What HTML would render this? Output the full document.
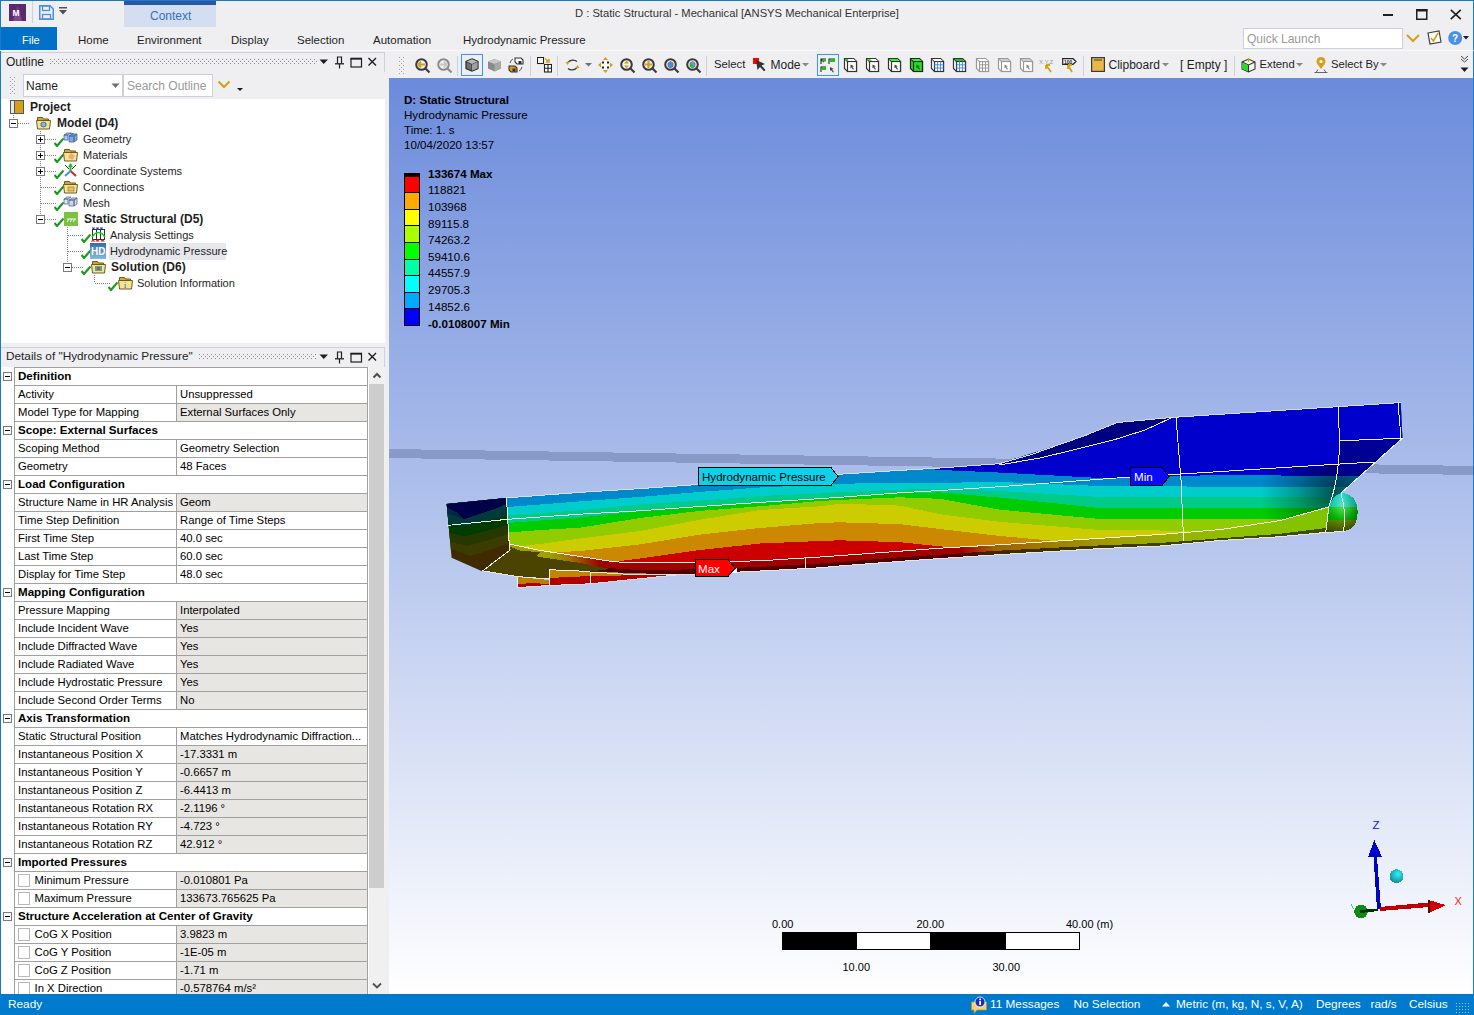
<!DOCTYPE html>
<html><head><meta charset="utf-8">
<style>
*{margin:0;padding:0;box-sizing:border-box}
html,body{width:1474px;height:1015px;overflow:hidden;background:#efeff2;font-family:"Liberation Sans",sans-serif;font-size:11px;color:#1e1e1e;position:relative}
.a{position:absolute;white-space:nowrap}
svg{position:absolute;left:0;top:0}
</style></head><body>
<div class="a" style="left:0px;top:0px;width:1474px;height:1px;background:#1979ca;"></div>
<div class="a" style="left:0px;top:0px;width:1px;height:1015px;background:#1979ca;"></div>
<div class="a" style="left:1473px;top:0px;width:1px;height:1015px;background:#1979ca;"></div>
<div class="a" style="left:124px;top:1px;width:92px;height:26px;background:#d3def0;"></div>
<div class="a" style="left:124px;top:1px;width:92px;height:4px;background:#2b57a0;"></div>
<div class="a" style="left:150px;top:9.84px;font-size:12px;line-height:12px;color:#3a6fb8">Context</div>
<div class="a" style="left:575px;top:8.02px;font-size:11.2px;line-height:11.2px;color:#333">D : Static Structural - Mechanical [ANSYS Mechanical Enterprise]</div>
<div class="a" style="left:1px;top:27px;width:56px;height:23px;background:#0070c8;"></div>
<div class="a" style="left:22px;top:34.69px;font-size:11px;line-height:11px;color:#fff">File</div>
<div class="a" style="left:78px;top:35.07px;font-size:11.5px;line-height:11.5px;color:#1e1e1e">Home</div>
<div class="a" style="left:137px;top:35.07px;font-size:11.5px;line-height:11.5px;color:#1e1e1e">Environment</div>
<div class="a" style="left:231px;top:35.07px;font-size:11.5px;line-height:11.5px;color:#1e1e1e">Display</div>
<div class="a" style="left:297px;top:35.07px;font-size:11.5px;line-height:11.5px;color:#1e1e1e">Selection</div>
<div class="a" style="left:373px;top:35.07px;font-size:11.5px;line-height:11.5px;color:#1e1e1e">Automation</div>
<div class="a" style="left:463px;top:35.07px;font-size:11.5px;line-height:11.5px;color:#1e1e1e">Hydrodynamic Pressure</div>
<div class="a" style="left:1243px;top:28px;width:160px;height:21px;background:#fff;border:1px solid #ccd0dc"></div>
<div class="a" style="left:1247px;top:32.84px;font-size:12px;line-height:12px;color:#9a9a9a">Quick Launch</div>
<div class="a" style="left:0px;top:50px;width:1474px;height:1px;background:#fafafa;"></div>
<div class="a" style="left:1px;top:52px;width:384px;height:1px;background:#cdd0de;"></div>
<div class="a" style="left:384px;top:52px;width:1px;height:20px;background:#cdd0de;"></div>
<div class="a" style="left:6px;top:55.84px;font-size:12px;line-height:12px;color:#1e1e1e">Outline</div>
<svg class="a" style="left:50px;top:59px" width="267" height="5"><defs><pattern id="gp1" width="4" height="4" patternUnits="userSpaceOnUse"><rect x="0" y="0" width="1" height="1" fill="#8a8a8a"/><rect x="2" y="2" width="1" height="1" fill="#8a8a8a"/></pattern></defs><rect width="267" height="5" fill="url(#gp1)"/></svg>
<svg class="a" style="left:319px;top:56px" width="60" height="13" viewBox="0 0 60 13"><polygon points="0.5,3.5 9,3.5 4.75,8" fill="#1e1e1e"/><path d="M18.5,7.5 V1 H22.5 V7.5" stroke="#1e1e1e" stroke-width="1.2" fill="none"/><path d="M16,7.8 H25" stroke="#1e1e1e" stroke-width="1.3"/><path d="M20.5,8 V12.5" stroke="#1e1e1e" stroke-width="1.2"/><rect x="32" y="2.5" width="10.5" height="8.5" fill="none" stroke="#1e1e1e" stroke-width="1.2"/><rect x="31.5" y="1.8" width="11.5" height="1.8" fill="#1e1e1e"/><path d="M49.5,2 L57,9.5 M57,2 L49.5,9.5" stroke="#1e1e1e" stroke-width="1.4"/></svg>
<svg class="a" style="left:10px;top:77px" width="6" height="17"><defs><pattern id="gp2" width="4" height="4" patternUnits="userSpaceOnUse"><rect x="0" y="0" width="1" height="1" fill="#a0a0a8"/><rect x="2" y="2" width="1" height="1" fill="#a0a0a8"/></pattern></defs><rect width="6" height="17" fill="url(#gp2)"/></svg>
<div class="a" style="left:23px;top:74px;width:100px;height:23px;background:#fff;border:1px solid #ccd0dc"></div>
<div class="a" style="left:26px;top:79.84px;font-size:12px;line-height:12px;color:#1e1e1e">Name</div>
<svg class="a" style="left:111px;top:83px" width="9" height="6"><polygon points="0.5,0.5 8.5,0.5 4.5,5" fill="#707070"/></svg>
<div class="a" style="left:123px;top:74px;width:90px;height:23px;background:#fff;border:1px solid #ccd0dc"></div>
<div class="a" style="left:127px;top:79.84px;font-size:12px;line-height:12px;color:#9a9a9a">Search Outline</div>
<svg class="a" style="left:217px;top:80px" width="30" height="14"><path d="M1.5,1.5 L7,7 L12.5,1.5" stroke="#d4a017" stroke-width="2" fill="none"/><polygon points="20,8 26,8 23,11" fill="#1e1e1e"/></svg>
<div class="a" style="left:1px;top:99px;width:384px;height:244px;background:#fff;"></div>
<div class="a" style="left:109px;top:243px;width:117px;height:17px;background:#e8e8ec;"></div>
<div class="a" style="left:30px;top:100.64px;font-size:12px;line-height:12px;font-weight:bold;color:#1e1e1e">Project</div>
<div class="a" style="left:57px;top:116.64px;font-size:12px;line-height:12px;font-weight:bold;color:#1e1e1e">Model (D4)</div>
<div class="a" style="left:83px;top:134.29px;font-size:11px;line-height:11px;color:#1e1e1e">Geometry</div>
<div class="a" style="left:83px;top:150.29px;font-size:11px;line-height:11px;color:#1e1e1e">Materials</div>
<div class="a" style="left:83px;top:166.29px;font-size:11px;line-height:11px;color:#1e1e1e">Coordinate Systems</div>
<div class="a" style="left:83px;top:182.29px;font-size:11px;line-height:11px;color:#1e1e1e">Connections</div>
<div class="a" style="left:83px;top:198.29px;font-size:11px;line-height:11px;color:#1e1e1e">Mesh</div>
<div class="a" style="left:84px;top:212.64px;font-size:12px;line-height:12px;font-weight:bold;color:#1e1e1e">Static Structural (D5)</div>
<div class="a" style="left:110px;top:230.29px;font-size:11px;line-height:11px;color:#1e1e1e">Analysis Settings</div>
<div class="a" style="left:110px;top:246.29px;font-size:11px;line-height:11px;color:#1e1e1e">Hydrodynamic Pressure</div>
<div class="a" style="left:111px;top:260.64px;font-size:12px;line-height:12px;font-weight:bold;color:#1e1e1e">Solution (D6)</div>
<div class="a" style="left:137px;top:278.29px;font-size:11px;line-height:11px;color:#1e1e1e">Solution Information</div>
<div class="a" style="left:13px;top:115px;width:1px;height:4px;background:repeating-linear-gradient(to bottom,#808080 0 1px,transparent 1px 2px)"></div>
<div class="a" style="left:18px;top:123px;width:11px;height:1px;background:repeating-linear-gradient(to right,#808080 0 1px,transparent 1px 2px)"></div>
<div class="a" style="left:40px;top:131px;width:1px;height:85px;background:repeating-linear-gradient(to bottom,#808080 0 1px,transparent 1px 2px)"></div>
<div class="a" style="left:45px;top:139px;width:11px;height:1px;background:repeating-linear-gradient(to right,#808080 0 1px,transparent 1px 2px)"></div>
<div class="a" style="left:45px;top:155px;width:11px;height:1px;background:repeating-linear-gradient(to right,#808080 0 1px,transparent 1px 2px)"></div>
<div class="a" style="left:45px;top:171px;width:11px;height:1px;background:repeating-linear-gradient(to right,#808080 0 1px,transparent 1px 2px)"></div>
<div class="a" style="left:41px;top:187px;width:15px;height:1px;background:repeating-linear-gradient(to right,#808080 0 1px,transparent 1px 2px)"></div>
<div class="a" style="left:41px;top:203px;width:15px;height:1px;background:repeating-linear-gradient(to right,#808080 0 1px,transparent 1px 2px)"></div>
<div class="a" style="left:45px;top:219px;width:11px;height:1px;background:repeating-linear-gradient(to right,#808080 0 1px,transparent 1px 2px)"></div>
<div class="a" style="left:67px;top:227px;width:1px;height:36px;background:repeating-linear-gradient(to bottom,#808080 0 1px,transparent 1px 2px)"></div>
<div class="a" style="left:68px;top:235px;width:15px;height:1px;background:repeating-linear-gradient(to right,#808080 0 1px,transparent 1px 2px)"></div>
<div class="a" style="left:68px;top:251px;width:15px;height:1px;background:repeating-linear-gradient(to right,#808080 0 1px,transparent 1px 2px)"></div>
<div class="a" style="left:72px;top:267px;width:11px;height:1px;background:repeating-linear-gradient(to right,#808080 0 1px,transparent 1px 2px)"></div>
<div class="a" style="left:94px;top:275px;width:1px;height:8px;background:repeating-linear-gradient(to bottom,#808080 0 1px,transparent 1px 2px)"></div>
<div class="a" style="left:95px;top:283px;width:15px;height:1px;background:repeating-linear-gradient(to right,#808080 0 1px,transparent 1px 2px)"></div>
<div class="a" style="left:9px;top:119px;width:9px;height:9px;border:1px solid #7a7a7a;background:#fff"></div><div class="a" style="left:11px;top:123px;width:5px;height:1px;background:#000;"></div>
<div class="a" style="left:36px;top:135px;width:9px;height:9px;border:1px solid #7a7a7a;background:#fff"></div><div class="a" style="left:38px;top:139px;width:5px;height:1px;background:#000;"></div><div class="a" style="left:40px;top:137px;width:1px;height:5px;background:#000;"></div>
<div class="a" style="left:36px;top:151px;width:9px;height:9px;border:1px solid #7a7a7a;background:#fff"></div><div class="a" style="left:38px;top:155px;width:5px;height:1px;background:#000;"></div><div class="a" style="left:40px;top:153px;width:1px;height:5px;background:#000;"></div>
<div class="a" style="left:36px;top:167px;width:9px;height:9px;border:1px solid #7a7a7a;background:#fff"></div><div class="a" style="left:38px;top:171px;width:5px;height:1px;background:#000;"></div><div class="a" style="left:40px;top:169px;width:1px;height:5px;background:#000;"></div>
<div class="a" style="left:36px;top:215px;width:9px;height:9px;border:1px solid #7a7a7a;background:#fff"></div><div class="a" style="left:38px;top:219px;width:5px;height:1px;background:#000;"></div>
<div class="a" style="left:63px;top:263px;width:9px;height:9px;border:1px solid #7a7a7a;background:#fff"></div><div class="a" style="left:65px;top:267px;width:5px;height:1px;background:#000;"></div>
<svg class="a" style="left:54px;top:138px" width="10" height="9" viewBox="0 0 10 9"><path d="M0.5,5 L3,8 L9.5,0.5" stroke="#1a9a1a" stroke-width="2.2" fill="none"/></svg>
<svg class="a" style="left:54px;top:154px" width="10" height="9" viewBox="0 0 10 9"><path d="M0.5,5 L3,8 L9.5,0.5" stroke="#1a9a1a" stroke-width="2.2" fill="none"/></svg>
<svg class="a" style="left:54px;top:170px" width="10" height="9" viewBox="0 0 10 9"><path d="M0.5,5 L3,8 L9.5,0.5" stroke="#1a9a1a" stroke-width="2.2" fill="none"/></svg>
<svg class="a" style="left:54px;top:186px" width="10" height="9" viewBox="0 0 10 9"><path d="M0.5,5 L3,8 L9.5,0.5" stroke="#1a9a1a" stroke-width="2.2" fill="none"/></svg>
<svg class="a" style="left:54px;top:202px" width="10" height="9" viewBox="0 0 10 9"><path d="M0.5,5 L3,8 L9.5,0.5" stroke="#1a9a1a" stroke-width="2.2" fill="none"/></svg>
<svg class="a" style="left:54px;top:218px" width="10" height="9" viewBox="0 0 10 9"><path d="M0.5,5 L3,8 L9.5,0.5" stroke="#1a9a1a" stroke-width="2.2" fill="none"/></svg>
<svg class="a" style="left:81px;top:234px" width="10" height="9" viewBox="0 0 10 9"><path d="M0.5,5 L3,8 L9.5,0.5" stroke="#1a9a1a" stroke-width="2.2" fill="none"/></svg>
<svg class="a" style="left:81px;top:250px" width="10" height="9" viewBox="0 0 10 9"><path d="M0.5,5 L3,8 L9.5,0.5" stroke="#1a9a1a" stroke-width="2.2" fill="none"/></svg>
<svg class="a" style="left:81px;top:266px" width="10" height="9" viewBox="0 0 10 9"><path d="M0.5,5 L3,8 L9.5,0.5" stroke="#1a9a1a" stroke-width="2.2" fill="none"/></svg>
<svg class="a" style="left:108px;top:282px" width="10" height="9" viewBox="0 0 10 9"><path d="M0.5,5 L3,8 L9.5,0.5" stroke="#1a9a1a" stroke-width="2.2" fill="none"/></svg>
<svg class="a" style="left:10px;top:100px" width="15" height="15" viewBox="0 0 15 15"><rect x="0.5" y="0.5" width="13" height="13" fill="#d4a017" stroke="#555" stroke-width="1"/><rect x="0.5" y="0.5" width="4" height="13" fill="#e8e8e8" stroke="#555" stroke-width="1"/></svg>
<svg class="a" style="left:36px;top:115px" width="15" height="15" viewBox="0 0 15 15"><path d="M1.5,2.5 h5 l1,1.5 h5 v2 h-11z" fill="#d4a72c" stroke="#6b5a2a" stroke-width="1"/><path d="M0.5,5.5 h14 l-1,8.5 h-12z" fill="#f6e58d" stroke="#6b5a2a" stroke-width="1"/><path d="M5,8 l2.5,-1 l2.5,1 v3 l-2.5,1 l-2.5,-1z" fill="#8ab4e8" stroke="#3a5a8a" stroke-width="0.8"/></svg>
<svg class="a" style="left:63px;top:132px" width="16" height="12" viewBox="0 0 16 12"><path d="M1,3 l3,-2 h4 l-3,2z M1,3 h4 v5 h-4z M8,1 l3,1 v0 l-3,2z" fill="#a8c8f0" stroke="#4a6a9a" stroke-width="0.8"/><path d="M6,4 l3,-2 h5 l-3,2z M6,4 h5 v6 h-5z M11,4 l3,-2 v6 l-3,2z" fill="#7aa8e8" stroke="#4a6a9a" stroke-width="0.8"/></svg>
<svg class="a" style="left:63px;top:147px" width="15" height="15" viewBox="0 0 15 15"><path d="M1.5,2.5 h5 l1,1.5 h5 v2 h-11z" fill="#d4a72c" stroke="#6b5a2a" stroke-width="1"/><path d="M0.5,5.5 h14 l-1,8.5 h-12z" fill="#f6e58d" stroke="#6b5a2a" stroke-width="1"/><rect x="6" y="7" width="5" height="5" fill="#f0a878" transform="rotate(30 8.5 9.5)"/></svg>
<svg class="a" style="left:63px;top:163px" width="15" height="15" viewBox="0 0 15 15"><path d="M7.5,8 V1" stroke="#20c020" stroke-width="2"/><polygon points="7.5,0 5,4 10,4" fill="#20c020"/><path d="M7.5,8 L13,13" stroke="#e02020" stroke-width="2"/><path d="M7.5,8 L2,13" stroke="#4a90e2" stroke-width="2"/><path d="M2,2 L6,6 M13,2 L9,6" stroke="#333" stroke-width="1"/></svg>
<svg class="a" style="left:63px;top:179px" width="15" height="15" viewBox="0 0 15 15"><path d="M1.5,2.5 h5 l1,1.5 h5 v2 h-11z" fill="#d4a72c" stroke="#6b5a2a" stroke-width="1"/><path d="M0.5,5.5 h14 l-1,8.5 h-12z" fill="#f6e58d" stroke="#6b5a2a" stroke-width="1"/><rect x="5" y="8" width="6" height="4" fill="#e8c070" stroke="#8a6a2a" stroke-width="0.6"/></svg>
<svg class="a" style="left:63px;top:196px" width="16" height="12" viewBox="0 0 16 12"><path d="M1,3 l3,-2 h4 l-3,2z M1,3 h4 v5 h-4z" fill="#dce6f4" stroke="#5a6a8a" stroke-width="0.8"/><path d="M6,4 l3,-2 h5 l-3,2z M6,4 h5 v6 h-5z M11,4 l3,-2 v6 l-3,2z" fill="#c8d8f0" stroke="#5a6a8a" stroke-width="0.8"/></svg>
<svg class="a" style="left:64px;top:212px" width="14" height="14" viewBox="0 0 14 14"><rect width="14" height="14" fill="#7cc242"/><path d="M3,7 h9 M4.5,7 l-1,3 M7.5,7 l-1,3 M10.5,7 l-1,3" stroke="#fff" stroke-width="1"/></svg>
<svg class="a" style="left:91px;top:227px" width="15" height="15" viewBox="0 0 15 15"><rect x="1.5" y="2.5" width="12" height="10" fill="#fff" stroke="#303030" stroke-width="1"/><path d="M5.5,2.5 V12.5 M9.5,2.5 V12.5" stroke="#303030" stroke-width="1"/><path d="M1,1 H4 M2.5,1 V2.5 M5,1 H8 M6.5,1 V2.5 M9,1 H12 M10.5,1 V2.5" stroke="#2030e0" stroke-width="1"/><path d="M1,10 Q7.5,1 14,10" stroke="#10d010" stroke-width="1.3" fill="none"/><path d="M0.5,14.5 L2,12.5 L3.5,14.5 M5,14.5 L6.5,12.5 L8,14.5 M10,14.5 L11.5,12.5 L13,14.5" fill="#e02020" stroke="#e02020" stroke-width="1"/></svg>
<svg class="a" style="left:90px;top:243px" width="16" height="16" viewBox="0 0 16 16"><defs><linearGradient id="hdg" x1="0" y1="0" x2="0" y2="1"><stop offset="0" stop-color="#2a6fb0"/><stop offset="1" stop-color="#8ab8e0"/></linearGradient></defs><rect width="16" height="16" fill="url(#hdg)"/><text x="1" y="12" font-family="Liberation Sans" font-size="10" fill="#fff" font-weight="bold">HD</text></svg>
<svg class="a" style="left:91px;top:259px" width="15" height="15" viewBox="0 0 15 15"><path d="M1.5,2.5 h5 l1,1.5 h5 v2 h-11z" fill="#d4a72c" stroke="#6b5a2a" stroke-width="1"/><path d="M0.5,5.5 h14 l-1,8.5 h-12z" fill="#f6e58d" stroke="#6b5a2a" stroke-width="1"/><rect x="4" y="7" width="7" height="5" fill="#40b0a0"/><rect x="6" y="8" width="3" height="3" fill="#e04040"/></svg>
<svg class="a" style="left:118px;top:275px" width="15" height="15" viewBox="0 0 15 15"><path d="M1.5,2.5 h5 l1,1.5 h5 v2 h-11z" fill="#d4a72c" stroke="#6b5a2a" stroke-width="1"/><path d="M0.5,5.5 h14 l-1,8.5 h-12z" fill="#f6e58d" stroke="#6b5a2a" stroke-width="1"/><text x="6" y="13" font-family="Liberation Serif" font-size="8" fill="#2050c0">i</text></svg>
<div class="a" style="left:1px;top:343px;width:384px;height:4px;background:#efeff2;"></div>
<div class="a" style="left:1px;top:347px;width:384px;height:1px;background:#cdd0de;"></div>
<div class="a" style="left:6px;top:350.51px;font-size:11.8px;line-height:11.8px;color:#1e1e1e">Details of "Hydrodynamic Pressure"</div>
<svg class="a" style="left:199px;top:354px" width="118" height="5"><defs><pattern id="gp3" width="4" height="4" patternUnits="userSpaceOnUse"><rect x="0" y="0" width="1" height="1" fill="#8a8a8a"/><rect x="2" y="2" width="1" height="1" fill="#8a8a8a"/></pattern></defs><rect width="118" height="5" fill="url(#gp3)"/></svg>
<svg class="a" style="left:319px;top:351px" width="60" height="13" viewBox="0 0 60 13"><polygon points="0.5,3.5 9,3.5 4.75,8" fill="#1e1e1e"/><path d="M18.5,7.5 V1 H22.5 V7.5" stroke="#1e1e1e" stroke-width="1.2" fill="none"/><path d="M16,7.8 H25" stroke="#1e1e1e" stroke-width="1.3"/><path d="M20.5,8 V12.5" stroke="#1e1e1e" stroke-width="1.2"/><rect x="32" y="2.5" width="10.5" height="8.5" fill="none" stroke="#1e1e1e" stroke-width="1.2"/><rect x="31.5" y="1.8" width="11.5" height="1.8" fill="#1e1e1e"/><path d="M49.5,2 L57,9.5 M57,2 L49.5,9.5" stroke="#1e1e1e" stroke-width="1.4"/></svg>
<div class="a" style="left:384px;top:347px;width:1px;height:20px;background:#cdd0de;"></div>
<div class="a" style="left:1px;top:367px;width:367px;height:627px;background:#fff;"></div>
<div class="a" style="left:14px;top:367px;width:354px;height:1px;background:#a0a0a0;"></div>
<div class="a" style="left:3px;top:372px;width:9px;height:9px;border:1px solid #7a7a7a;background:#fff"></div><div class="a" style="left:5px;top:376px;width:5px;height:1px;background:#000;"></div>
<div class="a" style="left:18px;top:369.98px;font-size:11.6px;line-height:11.6px;font-weight:bold;color:#000">Definition</div>
<div class="a" style="left:14px;top:385px;width:354px;height:1px;background:#a0a0a0;"></div>
<div class="a" style="left:176px;top:386px;width:1px;height:17px;background:#a0a0a0;"></div>
<div class="a" style="left:18px;top:389.03px;font-size:11.3px;line-height:11.3px;color:#000">Activity</div>
<div class="a" style="left:180px;top:389.03px;font-size:11.3px;line-height:11.3px;color:#000">Unsuppressed</div>
<div class="a" style="left:14px;top:403px;width:354px;height:1px;background:#a0a0a0;"></div>
<div class="a" style="left:177px;top:404px;width:190px;height:17px;background:#e8e6e2;"></div>
<div class="a" style="left:176px;top:404px;width:1px;height:17px;background:#a0a0a0;"></div>
<div class="a" style="left:18px;top:407.03px;font-size:11.3px;line-height:11.3px;color:#000">Model Type for Mapping</div>
<div class="a" style="left:180px;top:407.03px;font-size:11.3px;line-height:11.3px;color:#000">External Surfaces Only</div>
<div class="a" style="left:14px;top:421px;width:354px;height:1px;background:#a0a0a0;"></div>
<div class="a" style="left:3px;top:426px;width:9px;height:9px;border:1px solid #7a7a7a;background:#fff"></div><div class="a" style="left:5px;top:430px;width:5px;height:1px;background:#000;"></div>
<div class="a" style="left:18px;top:423.98px;font-size:11.6px;line-height:11.6px;font-weight:bold;color:#000">Scope: External Surfaces</div>
<div class="a" style="left:14px;top:439px;width:354px;height:1px;background:#a0a0a0;"></div>
<div class="a" style="left:176px;top:440px;width:1px;height:17px;background:#a0a0a0;"></div>
<div class="a" style="left:18px;top:443.03px;font-size:11.3px;line-height:11.3px;color:#000">Scoping Method</div>
<div class="a" style="left:180px;top:443.03px;font-size:11.3px;line-height:11.3px;color:#000">Geometry Selection</div>
<div class="a" style="left:14px;top:457px;width:354px;height:1px;background:#a0a0a0;"></div>
<div class="a" style="left:176px;top:458px;width:1px;height:17px;background:#a0a0a0;"></div>
<div class="a" style="left:18px;top:461.03px;font-size:11.3px;line-height:11.3px;color:#000">Geometry</div>
<div class="a" style="left:180px;top:461.03px;font-size:11.3px;line-height:11.3px;color:#000">48 Faces</div>
<div class="a" style="left:14px;top:475px;width:354px;height:1px;background:#a0a0a0;"></div>
<div class="a" style="left:3px;top:480px;width:9px;height:9px;border:1px solid #7a7a7a;background:#fff"></div><div class="a" style="left:5px;top:484px;width:5px;height:1px;background:#000;"></div>
<div class="a" style="left:18px;top:477.98px;font-size:11.6px;line-height:11.6px;font-weight:bold;color:#000">Load Configuration</div>
<div class="a" style="left:14px;top:493px;width:354px;height:1px;background:#a0a0a0;"></div>
<div class="a" style="left:177px;top:494px;width:190px;height:17px;background:#e8e6e2;"></div>
<div class="a" style="left:176px;top:494px;width:1px;height:17px;background:#a0a0a0;"></div>
<div class="a" style="left:18px;top:497.03px;font-size:11.3px;line-height:11.3px;color:#000">Structure Name in HR Analysis</div>
<div class="a" style="left:180px;top:497.03px;font-size:11.3px;line-height:11.3px;color:#000">Geom</div>
<div class="a" style="left:14px;top:511px;width:354px;height:1px;background:#a0a0a0;"></div>
<div class="a" style="left:176px;top:512px;width:1px;height:17px;background:#a0a0a0;"></div>
<div class="a" style="left:18px;top:515.03px;font-size:11.3px;line-height:11.3px;color:#000">Time Step Definition</div>
<div class="a" style="left:180px;top:515.03px;font-size:11.3px;line-height:11.3px;color:#000">Range of Time Steps</div>
<div class="a" style="left:14px;top:529px;width:354px;height:1px;background:#a0a0a0;"></div>
<div class="a" style="left:176px;top:530px;width:1px;height:17px;background:#a0a0a0;"></div>
<div class="a" style="left:18px;top:533.03px;font-size:11.3px;line-height:11.3px;color:#000">First Time Step</div>
<div class="a" style="left:180px;top:533.03px;font-size:11.3px;line-height:11.3px;color:#000">40.0 sec</div>
<div class="a" style="left:14px;top:547px;width:354px;height:1px;background:#a0a0a0;"></div>
<div class="a" style="left:176px;top:548px;width:1px;height:17px;background:#a0a0a0;"></div>
<div class="a" style="left:18px;top:551.03px;font-size:11.3px;line-height:11.3px;color:#000">Last Time Step</div>
<div class="a" style="left:180px;top:551.03px;font-size:11.3px;line-height:11.3px;color:#000">60.0 sec</div>
<div class="a" style="left:14px;top:565px;width:354px;height:1px;background:#a0a0a0;"></div>
<div class="a" style="left:176px;top:566px;width:1px;height:17px;background:#a0a0a0;"></div>
<div class="a" style="left:18px;top:569.03px;font-size:11.3px;line-height:11.3px;color:#000">Display for Time Step</div>
<div class="a" style="left:180px;top:569.03px;font-size:11.3px;line-height:11.3px;color:#000">48.0 sec</div>
<div class="a" style="left:14px;top:583px;width:354px;height:1px;background:#a0a0a0;"></div>
<div class="a" style="left:3px;top:588px;width:9px;height:9px;border:1px solid #7a7a7a;background:#fff"></div><div class="a" style="left:5px;top:592px;width:5px;height:1px;background:#000;"></div>
<div class="a" style="left:18px;top:585.98px;font-size:11.6px;line-height:11.6px;font-weight:bold;color:#000">Mapping Configuration</div>
<div class="a" style="left:14px;top:601px;width:354px;height:1px;background:#a0a0a0;"></div>
<div class="a" style="left:177px;top:602px;width:190px;height:17px;background:#e8e6e2;"></div>
<div class="a" style="left:176px;top:602px;width:1px;height:17px;background:#a0a0a0;"></div>
<div class="a" style="left:18px;top:605.03px;font-size:11.3px;line-height:11.3px;color:#000">Pressure Mapping</div>
<div class="a" style="left:180px;top:605.03px;font-size:11.3px;line-height:11.3px;color:#000">Interpolated</div>
<div class="a" style="left:14px;top:619px;width:354px;height:1px;background:#a0a0a0;"></div>
<div class="a" style="left:177px;top:620px;width:190px;height:17px;background:#e8e6e2;"></div>
<div class="a" style="left:176px;top:620px;width:1px;height:17px;background:#a0a0a0;"></div>
<div class="a" style="left:18px;top:623.03px;font-size:11.3px;line-height:11.3px;color:#000">Include Incident Wave</div>
<div class="a" style="left:180px;top:623.03px;font-size:11.3px;line-height:11.3px;color:#000">Yes</div>
<div class="a" style="left:14px;top:637px;width:354px;height:1px;background:#a0a0a0;"></div>
<div class="a" style="left:177px;top:638px;width:190px;height:17px;background:#e8e6e2;"></div>
<div class="a" style="left:176px;top:638px;width:1px;height:17px;background:#a0a0a0;"></div>
<div class="a" style="left:18px;top:641.03px;font-size:11.3px;line-height:11.3px;color:#000">Include Diffracted Wave</div>
<div class="a" style="left:180px;top:641.03px;font-size:11.3px;line-height:11.3px;color:#000">Yes</div>
<div class="a" style="left:14px;top:655px;width:354px;height:1px;background:#a0a0a0;"></div>
<div class="a" style="left:177px;top:656px;width:190px;height:17px;background:#e8e6e2;"></div>
<div class="a" style="left:176px;top:656px;width:1px;height:17px;background:#a0a0a0;"></div>
<div class="a" style="left:18px;top:659.03px;font-size:11.3px;line-height:11.3px;color:#000">Include Radiated Wave</div>
<div class="a" style="left:180px;top:659.03px;font-size:11.3px;line-height:11.3px;color:#000">Yes</div>
<div class="a" style="left:14px;top:673px;width:354px;height:1px;background:#a0a0a0;"></div>
<div class="a" style="left:177px;top:674px;width:190px;height:17px;background:#e8e6e2;"></div>
<div class="a" style="left:176px;top:674px;width:1px;height:17px;background:#a0a0a0;"></div>
<div class="a" style="left:18px;top:677.03px;font-size:11.3px;line-height:11.3px;color:#000">Include Hydrostatic Pressure</div>
<div class="a" style="left:180px;top:677.03px;font-size:11.3px;line-height:11.3px;color:#000">Yes</div>
<div class="a" style="left:14px;top:691px;width:354px;height:1px;background:#a0a0a0;"></div>
<div class="a" style="left:177px;top:692px;width:190px;height:17px;background:#e8e6e2;"></div>
<div class="a" style="left:176px;top:692px;width:1px;height:17px;background:#a0a0a0;"></div>
<div class="a" style="left:18px;top:695.03px;font-size:11.3px;line-height:11.3px;color:#000">Include Second Order Terms</div>
<div class="a" style="left:180px;top:695.03px;font-size:11.3px;line-height:11.3px;color:#000">No</div>
<div class="a" style="left:14px;top:709px;width:354px;height:1px;background:#a0a0a0;"></div>
<div class="a" style="left:3px;top:714px;width:9px;height:9px;border:1px solid #7a7a7a;background:#fff"></div><div class="a" style="left:5px;top:718px;width:5px;height:1px;background:#000;"></div>
<div class="a" style="left:18px;top:711.98px;font-size:11.6px;line-height:11.6px;font-weight:bold;color:#000">Axis Transformation</div>
<div class="a" style="left:14px;top:727px;width:354px;height:1px;background:#a0a0a0;"></div>
<div class="a" style="left:176px;top:728px;width:1px;height:17px;background:#a0a0a0;"></div>
<div class="a" style="left:18px;top:731.03px;font-size:11.3px;line-height:11.3px;color:#000">Static Structural Position</div>
<div class="a" style="left:180px;top:731.03px;font-size:11.3px;line-height:11.3px;color:#000">Matches Hydrodynamic Diffraction...</div>
<div class="a" style="left:14px;top:745px;width:354px;height:1px;background:#a0a0a0;"></div>
<div class="a" style="left:177px;top:746px;width:190px;height:17px;background:#e8e6e2;"></div>
<div class="a" style="left:176px;top:746px;width:1px;height:17px;background:#a0a0a0;"></div>
<div class="a" style="left:18px;top:749.03px;font-size:11.3px;line-height:11.3px;color:#000">Instantaneous Position X</div>
<div class="a" style="left:180px;top:749.03px;font-size:11.3px;line-height:11.3px;color:#000">-17.3331 m</div>
<div class="a" style="left:14px;top:763px;width:354px;height:1px;background:#a0a0a0;"></div>
<div class="a" style="left:177px;top:764px;width:190px;height:17px;background:#e8e6e2;"></div>
<div class="a" style="left:176px;top:764px;width:1px;height:17px;background:#a0a0a0;"></div>
<div class="a" style="left:18px;top:767.03px;font-size:11.3px;line-height:11.3px;color:#000">Instantaneous Position Y</div>
<div class="a" style="left:180px;top:767.03px;font-size:11.3px;line-height:11.3px;color:#000">-0.6657 m</div>
<div class="a" style="left:14px;top:781px;width:354px;height:1px;background:#a0a0a0;"></div>
<div class="a" style="left:177px;top:782px;width:190px;height:17px;background:#e8e6e2;"></div>
<div class="a" style="left:176px;top:782px;width:1px;height:17px;background:#a0a0a0;"></div>
<div class="a" style="left:18px;top:785.03px;font-size:11.3px;line-height:11.3px;color:#000">Instantaneous Position Z</div>
<div class="a" style="left:180px;top:785.03px;font-size:11.3px;line-height:11.3px;color:#000">-6.4413 m</div>
<div class="a" style="left:14px;top:799px;width:354px;height:1px;background:#a0a0a0;"></div>
<div class="a" style="left:177px;top:800px;width:190px;height:17px;background:#e8e6e2;"></div>
<div class="a" style="left:176px;top:800px;width:1px;height:17px;background:#a0a0a0;"></div>
<div class="a" style="left:18px;top:803.03px;font-size:11.3px;line-height:11.3px;color:#000">Instantaneous Rotation RX</div>
<div class="a" style="left:180px;top:803.03px;font-size:11.3px;line-height:11.3px;color:#000">-2.1196 °</div>
<div class="a" style="left:14px;top:817px;width:354px;height:1px;background:#a0a0a0;"></div>
<div class="a" style="left:177px;top:818px;width:190px;height:17px;background:#e8e6e2;"></div>
<div class="a" style="left:176px;top:818px;width:1px;height:17px;background:#a0a0a0;"></div>
<div class="a" style="left:18px;top:821.03px;font-size:11.3px;line-height:11.3px;color:#000">Instantaneous Rotation RY</div>
<div class="a" style="left:180px;top:821.03px;font-size:11.3px;line-height:11.3px;color:#000">-4.723 °</div>
<div class="a" style="left:14px;top:835px;width:354px;height:1px;background:#a0a0a0;"></div>
<div class="a" style="left:177px;top:836px;width:190px;height:17px;background:#e8e6e2;"></div>
<div class="a" style="left:176px;top:836px;width:1px;height:17px;background:#a0a0a0;"></div>
<div class="a" style="left:18px;top:839.03px;font-size:11.3px;line-height:11.3px;color:#000">Instantaneous Rotation RZ</div>
<div class="a" style="left:180px;top:839.03px;font-size:11.3px;line-height:11.3px;color:#000">42.912 °</div>
<div class="a" style="left:14px;top:853px;width:354px;height:1px;background:#a0a0a0;"></div>
<div class="a" style="left:3px;top:858px;width:9px;height:9px;border:1px solid #7a7a7a;background:#fff"></div><div class="a" style="left:5px;top:862px;width:5px;height:1px;background:#000;"></div>
<div class="a" style="left:18px;top:855.98px;font-size:11.6px;line-height:11.6px;font-weight:bold;color:#000">Imported Pressures</div>
<div class="a" style="left:14px;top:871px;width:354px;height:1px;background:#a0a0a0;"></div>
<div class="a" style="left:177px;top:872px;width:190px;height:17px;background:#e8e6e2;"></div>
<div class="a" style="left:176px;top:872px;width:1px;height:17px;background:#a0a0a0;"></div>
<div class="a" style="left:18px;top:874px;width:12px;height:13px;background:#fff;border:1px solid #b8b8b8"></div>
<div class="a" style="left:34.5px;top:875.03px;font-size:11.3px;line-height:11.3px;color:#000">Minimum Pressure</div>
<div class="a" style="left:180px;top:875.03px;font-size:11.3px;line-height:11.3px;color:#000">-0.010801 Pa</div>
<div class="a" style="left:14px;top:889px;width:354px;height:1px;background:#a0a0a0;"></div>
<div class="a" style="left:177px;top:890px;width:190px;height:17px;background:#e8e6e2;"></div>
<div class="a" style="left:176px;top:890px;width:1px;height:17px;background:#a0a0a0;"></div>
<div class="a" style="left:18px;top:892px;width:12px;height:13px;background:#fff;border:1px solid #b8b8b8"></div>
<div class="a" style="left:34.5px;top:893.03px;font-size:11.3px;line-height:11.3px;color:#000">Maximum Pressure</div>
<div class="a" style="left:180px;top:893.03px;font-size:11.3px;line-height:11.3px;color:#000">133673.765625 Pa</div>
<div class="a" style="left:14px;top:907px;width:354px;height:1px;background:#a0a0a0;"></div>
<div class="a" style="left:3px;top:912px;width:9px;height:9px;border:1px solid #7a7a7a;background:#fff"></div><div class="a" style="left:5px;top:916px;width:5px;height:1px;background:#000;"></div>
<div class="a" style="left:18px;top:909.98px;font-size:11.6px;line-height:11.6px;font-weight:bold;color:#000">Structure Acceleration at Center of Gravity</div>
<div class="a" style="left:14px;top:925px;width:354px;height:1px;background:#a0a0a0;"></div>
<div class="a" style="left:177px;top:926px;width:190px;height:17px;background:#e8e6e2;"></div>
<div class="a" style="left:176px;top:926px;width:1px;height:17px;background:#a0a0a0;"></div>
<div class="a" style="left:18px;top:928px;width:12px;height:13px;background:#fff;border:1px solid #b8b8b8"></div>
<div class="a" style="left:34.5px;top:929.03px;font-size:11.3px;line-height:11.3px;color:#000">CoG X Position</div>
<div class="a" style="left:180px;top:929.03px;font-size:11.3px;line-height:11.3px;color:#000">3.9823 m</div>
<div class="a" style="left:14px;top:943px;width:354px;height:1px;background:#a0a0a0;"></div>
<div class="a" style="left:177px;top:944px;width:190px;height:17px;background:#e8e6e2;"></div>
<div class="a" style="left:176px;top:944px;width:1px;height:17px;background:#a0a0a0;"></div>
<div class="a" style="left:18px;top:946px;width:12px;height:13px;background:#fff;border:1px solid #b8b8b8"></div>
<div class="a" style="left:34.5px;top:947.03px;font-size:11.3px;line-height:11.3px;color:#000">CoG Y Position</div>
<div class="a" style="left:180px;top:947.03px;font-size:11.3px;line-height:11.3px;color:#000">-1E-05 m</div>
<div class="a" style="left:14px;top:961px;width:354px;height:1px;background:#a0a0a0;"></div>
<div class="a" style="left:177px;top:962px;width:190px;height:17px;background:#e8e6e2;"></div>
<div class="a" style="left:176px;top:962px;width:1px;height:17px;background:#a0a0a0;"></div>
<div class="a" style="left:18px;top:964px;width:12px;height:13px;background:#fff;border:1px solid #b8b8b8"></div>
<div class="a" style="left:34.5px;top:965.03px;font-size:11.3px;line-height:11.3px;color:#000">CoG Z Position</div>
<div class="a" style="left:180px;top:965.03px;font-size:11.3px;line-height:11.3px;color:#000">-1.71 m</div>
<div class="a" style="left:14px;top:979px;width:354px;height:1px;background:#a0a0a0;"></div>
<div class="a" style="left:177px;top:980px;width:190px;height:17px;background:#e8e6e2;"></div>
<div class="a" style="left:176px;top:980px;width:1px;height:17px;background:#a0a0a0;"></div>
<div class="a" style="left:18px;top:982px;width:12px;height:13px;background:#fff;border:1px solid #b8b8b8"></div>
<div class="a" style="left:34.5px;top:983.03px;font-size:11.3px;line-height:11.3px;color:#000">In X Direction</div>
<div class="a" style="left:180px;top:983.03px;font-size:11.3px;line-height:11.3px;color:#000">-0.578764 m/s&#178;</div>
<div class="a" style="left:14px;top:367px;width:1px;height:627px;background:#a0a0a0;"></div>
<div class="a" style="left:367px;top:367px;width:1px;height:627px;background:#a0a0a0;"></div>
<div class="a" style="left:368px;top:367px;width:1px;height:627px;background:#ffffff;"></div>
<div class="a" style="left:369px;top:367px;width:16px;height:627px;background:#f0f0f0;"></div>
<div class="a" style="left:369px;top:384px;width:15px;height:504px;background:#cdcdcd;"></div>
<svg class="a" style="left:372px;top:372px" width="10" height="7"><path d="M1.5,5.5 L5,2 L8.5,5.5" stroke="#505050" stroke-width="2" fill="none"/></svg>
<svg class="a" style="left:372px;top:982px" width="10" height="7"><path d="M1,1.5 L5,5.5 L9,1.5" stroke="#505050" stroke-width="1.8" fill="none"/></svg>
<svg class="a" style="left:9px;top:4px" width="17" height="17" viewBox="0 0 17 17"><rect width="17" height="17" fill="#5b2a6e"/><path d="M4,17 L8.5,2 L13,17Z" fill="#7a4a8e"/><text x="3.5" y="12" font-family="Liberation Sans" font-weight="bold" font-size="8.5" fill="#fff">M</text></svg>
<div class="a" style="left:32px;top:1px;width:1px;height:22px;background:#d0d0d8;"></div>
<svg class="a" style="left:39px;top:5px" width="15" height="15" viewBox="0 0 15 15"><path d="M0.75,0.75 H11 L14.25,4 V14.25 H0.75Z" fill="none" stroke="#4a90e2" stroke-width="1.5"/><rect x="3.5" y="1" width="7" height="4.5" fill="none" stroke="#4a90e2" stroke-width="1.3"/><rect x="3.5" y="9.5" width="8" height="4.5" fill="none" stroke="#4a90e2" stroke-width="1.3"/></svg>
<svg class="a" style="left:59px;top:7px" width="9" height="8" viewBox="0 0 9 8"><rect x="0" y="0" width="8" height="1.5" fill="#505050"/><polygon points="0,3 8,3 4,7.5" fill="#505050"/></svg>
<div class="a" style="left:1383px;top:14px;width:10px;height:2px;background:#1e1e1e;"></div>
<svg class="a" style="left:1416px;top:9px" width="12" height="11" viewBox="0 0 12 11"><rect x="0.75" y="0.75" width="10" height="9.5" fill="none" stroke="#1e1e1e" stroke-width="1.5"/><rect x="0" y="0" width="11.5" height="2.5" fill="#1e1e1e"/></svg>
<svg class="a" style="left:1450px;top:9px" width="12" height="11" viewBox="0 0 12 11"><path d="M0.8,0.8 L10.8,10.2 M10.8,0.8 L0.8,10.2" stroke="#1e1e1e" stroke-width="1.6"/></svg>
<svg class="a" style="left:1406px;top:34px" width="15" height="9" viewBox="0 0 15 9"><path d="M1,1 L7,7 L13,1" stroke="#d4a017" stroke-width="2" fill="none"/></svg>
<svg class="a" style="left:1426px;top:30px" width="16" height="16" viewBox="0 0 16 16"><path d="M2,3 L13,1 L15,12 L4,14Z" fill="#fff" stroke="#404040" stroke-width="1.2"/><path d="M5,8 L7.5,11 L12,3" stroke="#d4a017" stroke-width="1.6" fill="none"/></svg>
<svg class="a" style="left:1448px;top:31px" width="22" height="15" viewBox="0 0 22 15"><circle cx="7.2" cy="7" r="7" fill="#4a90e2"/><text x="4" y="11" font-family="Liberation Sans" font-weight="bold" font-size="10" fill="#fff">?</text><polygon points="15,5 21,5 18,8.5" fill="#1e1e1e"/></svg>
<div class="a" style="left:389px;top:51px;width:1084px;height:27px;background:#efeff2;"></div>
<svg class="a" style="left:399px;top:57px" width="6" height="18"><defs><pattern id="tgp" width="4" height="4" patternUnits="userSpaceOnUse"><rect x="0" y="0" width="1" height="1" fill="#a0a0a8"/><rect x="2" y="2" width="1" height="1" fill="#a0a0a8"/></pattern></defs><rect width="6" height="18" fill="url(#tgp)"/></svg>
<svg class="a" style="left:415px;top:58px" width="16" height="16" viewBox="0 0 16 16"><circle cx="6.5" cy="6.5" r="5.3" fill="none" stroke="#3a3a3a" stroke-width="2"/><path d="M10.5,10.5 L14.5,14.5" stroke="#3a3a3a" stroke-width="2.2"/><path d="M3,6.5 H10 M3,6.5 L6,3.8 M3,6.5 L6,9.2" stroke="#d4a017" stroke-width="2" fill="none"/></svg>
<svg class="a" style="left:437px;top:58px" width="16" height="16" viewBox="0 0 16 16"><circle cx="6.5" cy="6.5" r="5.3" fill="none" stroke="#8a8a8a" stroke-width="2"/><path d="M10.5,10.5 L14.5,14.5" stroke="#8a8a8a" stroke-width="2.2"/><path d="M3,6.5 H10 M10,6.5 L7,3.8 M10,6.5 L7,9.2" stroke="#c8c8c8" stroke-width="2" fill="none"/></svg>
<div class="a" style="left:457px;top:56px;width:1px;height:20px;background:#ccd0dc;"></div>
<div class="a" style="left:461px;top:54px;width:22px;height:22px;background:transparent;border:1px solid #3399ff"></div>
<svg class="a" style="left:465px;top:58px" width="14" height="14" viewBox="0 0 14 14"><path d="M7,0.8 L13,3.5 V10.5 L7,13.2 L1,10.5 V3.5Z" fill="#707070" stroke="#2a2a2a" stroke-width="1.2"/><path d="M1,3.5 L7,6.2 L13,3.5 M7,6.2 V13" stroke="#2a2a2a" stroke-width="1" fill="none"/><path d="M1.5,3.6 L7,1.2 L12.5,3.6 L7,6Z" fill="#b8b8b8"/><path d="M7,6.5 L12.5,4 V10.3 L7,12.8Z" fill="#a0a0a0"/></svg>
<svg class="a" style="left:487px;top:58px" width="15" height="14" viewBox="0 0 15 14"><path d="M7.5,1 L14,3.5 V10.5 L7.5,13.5 L1,10.5 V3.5Z" fill="#8a8a8a"/><path d="M1,3.5 L7.5,1 L14,3.5 L7.5,6Z" fill="#c8c8c8"/><path d="M7.5,6 L14,3.5 V10.5 L7.5,13.5Z" fill="#a8a8a8"/></svg>
<svg class="a" style="left:508px;top:57px" width="16" height="16" viewBox="0 0 16 16"><path d="M7,1 l6,0 l2,2 v4 h-6 l-2,-2z" fill="#fff" stroke="#333" stroke-width="1.1"/><rect x="10.5" y="4" width="3" height="3" fill="#333"/><path d="M1,9 l6,0 l2,2 v4 h-6 l-2,-2z" fill="#d4a017" stroke="#333" stroke-width="1.1"/><rect x="4.5" y="11.5" width="3" height="3" fill="#333"/><path d="M2,6 Q3,2.5 5,2 M14,10 Q13,13.5 11,14" stroke="#555" stroke-width="1" fill="none"/></svg>
<div class="a" style="left:530px;top:56px;width:1px;height:20px;background:#ccd0dc;"></div>
<svg class="a" style="left:537px;top:57px" width="15" height="16" viewBox="0 0 15 16"><rect x="0.5" y="0.5" width="6" height="6" fill="#fff" stroke="#222" stroke-width="1.1"/><rect x="7.5" y="7.5" width="7" height="7.5" fill="#fff" stroke="#222" stroke-width="1.1"/><path d="M11,7.5 V15 M7.5,11.2 H14.5" stroke="#222" stroke-width="1.1"/><path d="M8,1.5 L12,5 M12,2 V5 H9" stroke="#d4a017" stroke-width="1.5" fill="none"/></svg>
<div class="a" style="left:557px;top:56px;width:1px;height:20px;background:#ccd0dc;"></div>
<svg class="a" style="left:565px;top:58px" width="15" height="14" viewBox="0 0 15 14"><path d="M3,4.5 A6,5.5 0 0 1 12,3.5 M12,9.5 A6,5.5 0 0 1 3,10.5" stroke="#333" stroke-width="1.3" fill="none"/><polygon points="0.5,4 5,3.5 2.5,7" fill="#d4a017"/><polygon points="14.5,10 10,10.5 12.5,7" fill="#d4a017"/></svg>
<svg class="a" style="left:585px;top:63px" width="7" height="4" viewBox="0 0 7 4"><polygon points="0,0 7,0 3.5,3.5" fill="#707080"/></svg>
<svg class="a" style="left:598px;top:57px" width="15" height="16" viewBox="0 0 15 16"><polygon points="7.5,0 10,3 5,3" fill="#d4a017"/><polygon points="7.5,16 10,13 5,13" fill="#d4a017"/><polygon points="0,8 3,5.5 3,10.5" fill="#d4a017"/><polygon points="15,8 12,5.5 12,10.5" fill="#d4a017"/><rect x="4" y="4.5" width="7" height="7" fill="#fff"/><rect x="4" y="4.5" width="2" height="2" fill="#222"/><rect x="9" y="4.5" width="2" height="2" fill="#222"/><rect x="4" y="9.5" width="2" height="2" fill="#222"/><rect x="9" y="9.5" width="2" height="2" fill="#222"/><rect x="3" y="6" width="9" height="4" fill="#d4a017" opacity="0.0"/></svg>
<svg class="a" style="left:620px;top:58px" width="16" height="16" viewBox="0 0 16 16"><circle cx="6.5" cy="6.5" r="5.3" fill="none" stroke="#3a3a3a" stroke-width="2"/><path d="M10.5,10.5 L14.5,14.5" stroke="#3a3a3a" stroke-width="2.2"/><polygon points="6.5,2.5 9,5.5 4,5.5" fill="#d4a017"/><polygon points="6.5,10.5 9,7.5 4,7.5" fill="#d4a017"/></svg>
<svg class="a" style="left:642px;top:58px" width="16" height="16" viewBox="0 0 16 16"><circle cx="6.5" cy="6.5" r="5.3" fill="none" stroke="#3a3a3a" stroke-width="2"/><path d="M10.5,10.5 L14.5,14.5" stroke="#3a3a3a" stroke-width="2.2"/><path d="M6.5,3 V10 M3,6.5 H10" stroke="#d4a017" stroke-width="2.2"/></svg>
<svg class="a" style="left:664px;top:58px" width="16" height="16" viewBox="0 0 16 16"><circle cx="6.5" cy="6.5" r="5.3" fill="none" stroke="#3a3a3a" stroke-width="2"/><path d="M10.5,10.5 L14.5,14.5" stroke="#3a3a3a" stroke-width="2.2"/><path d="M4,5 L6.5,3.5 L9,5 V8.5 L6.5,10 L4,8.5Z" fill="#4a90e2" stroke="#555" stroke-width="0.6"/></svg>
<svg class="a" style="left:686px;top:58px" width="16" height="16" viewBox="0 0 16 16"><circle cx="6.5" cy="6.5" r="5.3" fill="none" stroke="#3a3a3a" stroke-width="2"/><path d="M10.5,10.5 L14.5,14.5" stroke="#3a3a3a" stroke-width="2.2"/><path d="M4,5 L6.5,3.5 L9,5 V8.5 L6.5,10 L4,8.5Z" fill="#60a0e0" stroke="#555" stroke-width="0.6"/><path d="M4,5 L6.5,6.5 V10 L4,8.5Z" fill="#20c020"/></svg>
<div class="a" style="left:706px;top:56px;width:1px;height:20px;background:#ccd0dc;"></div>
<div class="a" style="left:714px;top:59.43px;font-size:11.3px;line-height:11.3px;color:#1e1e1e">Select</div>
<div class="a" style="left:753px;top:58px;width:6px;height:6px;background:#ff0000;"></div>
<svg class="a" style="left:755px;top:59px" width="12" height="13" viewBox="0 0 12 13"><polygon points="1,1 10,5 6.5,6.5 10.5,11 9,12.3 5,8 2.5,11" fill="#333"/></svg>
<div class="a" style="left:770.5px;top:58.84px;font-size:12px;line-height:12px;color:#1e1e1e">Mode</div>
<svg class="a" style="left:802px;top:63px" width="7" height="4" viewBox="0 0 7 4"><polygon points="0,0 7,0 3.5,3.5" fill="#888"/></svg>
<div class="a" style="left:817px;top:54px;width:22px;height:22px;background:transparent;border:1px solid #3399ff"></div>
<svg class="a" style="left:820px;top:57px" width="16" height="16" viewBox="0 0 16 16"><path d="M1,7 V2 H6 M1,2 L4,5" stroke="#222" stroke-width="1.1" fill="none"/><rect x="2" y="2.5" width="4" height="2" fill="#20c020"/><path d="M9,7 V2 H15" stroke="#222" stroke-width="1.1" fill="none"/><rect x="10" y="2" width="5" height="3" fill="#20c020"/><path d="M1,15 V10 H6" stroke="#222" stroke-width="1.1" fill="none"/><rect x="2" y="10" width="4" height="3" fill="#20c020"/><polygon points="10,10 14,12 12,12.5 14,15 13,15.5 11,13 10,14" fill="#444"/></svg>
<svg class="a" style="left:843px;top:58px" width="15" height="15" viewBox="0 0 15 15"><path d="M13.5,3.5 L10.5,0.5 H1.5 V10.5 L4.5,13.5 H13.5Z" fill="#fff" stroke="#333" stroke-width="1.2"/><rect x="4.5" y="3.5" width="9" height="10" fill="#fff" stroke="#333" stroke-width="1.2"/><path d="M4.5,3.5 L1.5,0.5" stroke="#333" stroke-width="1.2"/><path d="M2,1 H10.3 L13,3 H4.5Z" fill="#fff"/><polygon points="7.5,6.5 11,8.3 9.3,8.8 11,11 10,11.7 8.5,9.6 7.5,10.5" fill="#444"/><circle cx="4" cy="2" r="1.3" fill="#20c020"/></svg>
<svg class="a" style="left:865px;top:58px" width="15" height="15" viewBox="0 0 15 15"><path d="M13.5,3.5 L10.5,0.5 H1.5 V10.5 L4.5,13.5 H13.5Z" fill="#fff" stroke="#333" stroke-width="1.2"/><rect x="4.5" y="3.5" width="9" height="10" fill="#fff" stroke="#333" stroke-width="1.2"/><path d="M4.5,3.5 L1.5,0.5" stroke="#333" stroke-width="1.2"/><path d="M2,1 H10.3 L13,3 H4.5Z" fill="#fff"/><path d="M2,1 H5 L7,3 H4.5Z" fill="#20e020"/><polygon points="7.5,6.5 11,8.3 9.3,8.8 11,11 10,11.7 8.5,9.6 7.5,10.5" fill="#444"/></svg>
<svg class="a" style="left:887px;top:58px" width="15" height="15" viewBox="0 0 15 15"><path d="M13.5,3.5 L10.5,0.5 H1.5 V10.5 L4.5,13.5 H13.5Z" fill="#fff" stroke="#333" stroke-width="1.2"/><rect x="4.5" y="3.5" width="9" height="10" fill="#fff" stroke="#333" stroke-width="1.2"/><path d="M4.5,3.5 L1.5,0.5" stroke="#333" stroke-width="1.2"/><path d="M2,1 H10.3 L13,3 H4.5Z" fill="#20ff20"/><polygon points="7.5,6.5 11,8.3 9.3,8.8 11,11 10,11.7 8.5,9.6 7.5,10.5" fill="#444"/></svg>
<svg class="a" style="left:909px;top:58px" width="15" height="15" viewBox="0 0 15 15"><path d="M13.5,3.5 L10.5,0.5 H1.5 V10.5 L4.5,13.5 H13.5Z" fill="#20e020" stroke="#222" stroke-width="1.2"/><rect x="4.5" y="3.5" width="9" height="10" fill="#20e020" stroke="#222" stroke-width="1.2"/><path d="M4.5,3.5 L1.5,0.5" stroke="#222" stroke-width="1.2"/><path d="M2,1 H10.3 L13,3 H4.5Z" fill="#20ff20"/><polygon points="7.5,6.5 11,8.3 9.3,8.8 11,11 10,11.7 8.5,9.6 7.5,10.5" fill="#444"/></svg>
<svg class="a" style="left:930px;top:58px" width="15" height="15" viewBox="0 0 15 15"><path d="M13.5,3.5 L10.5,0.5 H1.5 V10.5 L4.5,13.5 H13.5Z" fill="#fff" stroke="#333" stroke-width="1.2"/><rect x="4.5" y="3.5" width="9" height="10" fill="#fff" stroke="#333" stroke-width="1.2"/><path d="M4.5,3.5 L1.5,0.5" stroke="#333" stroke-width="1.2"/><path d="M2,1 H10.3 L13,3 H4.5Z" fill="#fff"/><path d="M7.5,3.5 V13 M10.5,3.5 V13 M4.5,6.8 H13.5 M4.5,10 H13.5" stroke="#4a90e2" stroke-width="1"/></svg>
<svg class="a" style="left:952px;top:58px" width="15" height="15" viewBox="0 0 15 15"><path d="M13.5,3.5 L10.5,0.5 H1.5 V10.5 L4.5,13.5 H13.5Z" fill="#fff" stroke="#333" stroke-width="1.2"/><rect x="4.5" y="3.5" width="9" height="10" fill="#fff" stroke="#333" stroke-width="1.2"/><path d="M4.5,3.5 L1.5,0.5" stroke="#333" stroke-width="1.2"/><path d="M2,1 H10.3 L13,3 H4.5Z" fill="#20c020"/><path d="M7.5,3.5 V13 M10.5,3.5 V13 M4.5,6.8 H13.5 M4.5,10 H13.5" stroke="#4a90e2" stroke-width="1"/></svg>
<svg class="a" style="left:975px;top:58px" width="15" height="15" viewBox="0 0 15 15"><path d="M13.5,3.5 L10.5,0.5 H1.5 V10.5 L4.5,13.5 H13.5Z" fill="#fff" stroke="#999" stroke-width="1.2"/><rect x="4.5" y="3.5" width="9" height="10" fill="#fff" stroke="#999" stroke-width="1.2"/><path d="M4.5,3.5 L1.5,0.5" stroke="#999" stroke-width="1.2"/><path d="M2,1 H10.3 L13,3 H4.5Z" fill="#fff"/><path d="M7.5,3.5 V13 M10.5,3.5 V13 M4.5,6.8 H13.5 M4.5,10 H13.5" stroke="#999" stroke-width="1"/></svg>
<svg class="a" style="left:997px;top:58px" width="15" height="15" viewBox="0 0 15 15"><path d="M13.5,3.5 L10.5,0.5 H1.5 V10.5 L4.5,13.5 H13.5Z" fill="#fff" stroke="#999" stroke-width="1.2"/><rect x="4.5" y="3.5" width="9" height="10" fill="#fff" stroke="#999" stroke-width="1.2"/><path d="M4.5,3.5 L1.5,0.5" stroke="#999" stroke-width="1.2"/><path d="M2,1 H10.3 L13,3 H4.5Z" fill="#ccc"/><polygon points="7.5,6.5 11,8.3 9.3,8.8 11,11 10,11.7 8.5,9.6 7.5,10.5" fill="#888"/></svg>
<svg class="a" style="left:1019px;top:58px" width="15" height="15" viewBox="0 0 15 15"><path d="M13.5,3.5 L10.5,0.5 H1.5 V10.5 L4.5,13.5 H13.5Z" fill="#fff" stroke="#999" stroke-width="1.2"/><rect x="4.5" y="3.5" width="9" height="10" fill="#fff" stroke="#999" stroke-width="1.2"/><path d="M4.5,3.5 L1.5,0.5" stroke="#999" stroke-width="1.2"/><path d="M2,1 H10.3 L13,3 H4.5Z" fill="#ccc"/><polygon points="7.5,6.5 11,8.3 9.3,8.8 11,11 10,11.7 8.5,9.6 7.5,10.5" fill="#888"/></svg>
<svg class="a" style="left:1039px;top:58px" width="18" height="15" viewBox="0 0 18 15"><text x="0" y="5.5" font-family="Liberation Sans" font-size="6" fill="#999">X.Y.Z</text><path d="M7,7 L12,14 M7,7 V11 M7,7 H11" stroke="#d4a017" stroke-width="1.8" fill="none"/></svg>
<svg class="a" style="left:1062px;top:58px" width="15" height="15" viewBox="0 0 15 15"><path d="M0.7,0.7 H11 L14,3.5 L11,6.3 H0.7Z" fill="#fff" stroke="#222" stroke-width="1.2"/><text x="2" y="5.5" font-family="Liberation Sans" font-weight="bold" font-size="5" fill="#222">100</text><path d="M6,7 L10,14 M6,7 V11 M6,7 H10" stroke="#d4a017" stroke-width="1.8" fill="none"/></svg>
<div class="a" style="left:1083px;top:56px;width:1px;height:20px;background:#ccd0dc;"></div>
<svg class="a" style="left:1091px;top:57px" width="14" height="15" viewBox="0 0 14 15"><rect x="0.6" y="0.6" width="12.8" height="13.8" fill="#e8b84a" stroke="#3a3a3a" stroke-width="1.2"/><path d="M3,3 H11" stroke="#3a3a3a" stroke-width="1"/></svg>
<div class="a" style="left:1108.5px;top:58.84px;font-size:12px;line-height:12px;color:#1e1e1e">Clipboard</div>
<svg class="a" style="left:1162px;top:63px" width="7" height="4" viewBox="0 0 7 4"><polygon points="0,0 7,0 3.5,3.5" fill="#888"/></svg>
<div class="a" style="left:1180px;top:58.84px;font-size:12px;line-height:12px;color:#1e1e1e">[ Empty ]</div>
<div class="a" style="left:1234px;top:56px;width:1px;height:20px;background:#ccd0dc;"></div>
<svg class="a" style="left:1241px;top:57px" width="15" height="16" viewBox="0 0 15 16"><path d="M1,5 L7.5,2 L14,5 V12 L7.5,15 L1,12Z" fill="#f4f4f4" stroke="#333" stroke-width="1.1"/><path d="M1,5 L7.5,8 L14,5 M7.5,8 V15" stroke="#333" stroke-width="1.1" fill="none"/><path d="M1.5,5.7 L7,8.3 V14.3 L1.5,11.8Z" fill="#20e020"/><path d="M7.5,1 V5 M5.5,3 H9.5" stroke="#d4a017" stroke-width="1.2"/></svg>
<div class="a" style="left:1259.5px;top:59.43px;font-size:11.3px;line-height:11.3px;color:#1e1e1e">Extend</div>
<svg class="a" style="left:1296px;top:63px" width="7" height="4" viewBox="0 0 7 4"><polygon points="0,0 7,0 3.5,3.5" fill="#888"/></svg>
<svg class="a" style="left:1314px;top:57px" width="14" height="16" viewBox="0 0 14 16"><path d="M7,12 C3,7 2.5,5.5 2.5,4.5 A4.5,4.5 0 0 1 11.5,4.5 C11.5,5.5 11,7 7,12Z" fill="#d4a017"/><circle cx="7" cy="4.5" r="1.6" fill="#fff"/><path d="M0.5,15.5 H13.5 M2,15.5 L4,12.5 M12,15.5 L10,12.5" stroke="#555" stroke-width="0.9" fill="none"/></svg>
<div class="a" style="left:1331px;top:59.43px;font-size:11.3px;line-height:11.3px;color:#1e1e1e">Select By</div>
<svg class="a" style="left:1380px;top:63px" width="7" height="4" viewBox="0 0 7 4"><polygon points="0,0 7,0 3.5,3.5" fill="#888"/></svg>
<svg class="a" style="left:1460px;top:55px" width="9" height="19" viewBox="0 0 9 19"><path d="M1,1 L4.5,4 L8,1 M1,4 L4.5,7 L8,4" stroke="#444" stroke-width="1" fill="none"/><polygon points="0.5,12.5 8.5,12.5 4.5,17" fill="#1e1e1e"/></svg>
<div class="a" style="left:389px;top:78px;width:1084px;height:916px;background:linear-gradient(to bottom,#6b8bdb 0%,#ffffff 100%)"></div>
<svg width="1474" height="1015" viewBox="0 0 1474 1015" style="shape-rendering:crispEdges">
<defs>
<clipPath id="gclip"><rect x="389" y="78" width="1084" height="916"/></clipPath>
<linearGradient id="tr" x1="0" y1="0" x2="0" y2="1">
<stop offset="0" stop-color="#000048"/><stop offset="0.28" stop-color="#000048"/>
<stop offset="0.28" stop-color="#002848"/><stop offset="0.4" stop-color="#002848"/>
<stop offset="0.4" stop-color="#003838"/><stop offset="0.52" stop-color="#003838"/>
<stop offset="0.52" stop-color="#003000"/><stop offset="0.64" stop-color="#003000"/>
<stop offset="0.64" stop-color="#263600"/><stop offset="0.76" stop-color="#263600"/>
<stop offset="0.76" stop-color="#3c3a00"/><stop offset="0.9" stop-color="#3c3a00"/>
<stop offset="0.9" stop-color="#3e2800"/><stop offset="1" stop-color="#3e2800"/>
</linearGradient>
<linearGradient id="btm1" x1="509" y1="0" x2="1330" y2="0" gradientUnits="userSpaceOnUse">
<stop offset="0" stop-color="#a0a000"/><stop offset="0.05" stop-color="#a0a000"/><stop offset="0.075" stop-color="#a07000"/><stop offset="0.11" stop-color="#a00000"/><stop offset="0.55" stop-color="#a00000"/><stop offset="0.59" stop-color="#a06000"/><stop offset="0.74" stop-color="#a0a000"/><stop offset="0.88" stop-color="#90c000"/><stop offset="1" stop-color="#80c400"/>
</linearGradient>
<linearGradient id="btm2" x1="509" y1="0" x2="1330" y2="0" gradientUnits="userSpaceOnUse">
<stop offset="0" stop-color="#4a4800"/><stop offset="0.06" stop-color="#4a4400"/><stop offset="0.09" stop-color="#4a3000"/><stop offset="0.12" stop-color="#500000"/><stop offset="0.55" stop-color="#500000"/><stop offset="0.59" stop-color="#402800"/><stop offset="0.8" stop-color="#404000"/><stop offset="1" stop-color="#405000"/>
</linearGradient>
<radialGradient id="stemshade" cx="1335" cy="492" r="75" gradientUnits="userSpaceOnUse">
<stop offset="0" stop-color="#000" stop-opacity="0.6"/><stop offset="0.5" stop-color="#000" stop-opacity="0.25"/><stop offset="1" stop-color="#000" stop-opacity="0"/>
</radialGradient>
<linearGradient id="sternshade" x1="509" y1="0" x2="625" y2="0" gradientUnits="userSpaceOnUse">
<stop offset="0" stop-color="#000" stop-opacity="0.22"/><stop offset="1" stop-color="#000" stop-opacity="0"/>
</linearGradient>
<linearGradient id="bulb" x1="0" y1="493" x2="0" y2="532" gradientUnits="userSpaceOnUse">
<stop offset="0" stop-color="#00d8d0"/><stop offset="0.37" stop-color="#00d8a0"/><stop offset="0.37" stop-color="#00d000"/><stop offset="0.7" stop-color="#00b000"/><stop offset="0.7" stop-color="#609000"/><stop offset="1" stop-color="#405000"/>
</linearGradient>
<radialGradient id="bulbhl" cx="1343" cy="505" r="16" gradientUnits="userSpaceOnUse">
<stop offset="0" stop-color="#fff" stop-opacity="0.35"/><stop offset="1" stop-color="#fff" stop-opacity="0"/>
</radialGradient>
<linearGradient id="bulbsh" x1="1325" y1="0" x2="1358" y2="0" gradientUnits="userSpaceOnUse">
<stop offset="0" stop-color="#000" stop-opacity="0.15"/><stop offset="0.5" stop-color="#000" stop-opacity="0"/><stop offset="1" stop-color="#000" stop-opacity="0.3"/>
</linearGradient>
<clipPath id="side"><polygon points="506.5,497.9 580.0,492.4 640.0,488.6 700.0,484.4 840.0,474.2 900.0,470.4 940.0,468.0 999.0,463.7 1054.0,446.5 1084.0,436.0 1117.0,422.6 1172.5,417.4 1400.7,402.6 1402.4,438.2 1341.0,493.0 1330.0,505.0 1328.6,507.0 1280.0,520.6 1220.0,529.6 1160.0,534.5 1100.0,538.3 1000.0,544.7 940.0,548.2 900.0,551.2 840.0,555.6 820.0,557.0 760.0,560.8 700.0,562.0 640.0,563.0 613.0,561.7 580.0,556.5 540.0,550.4 509.3,544.0 509.3,544.0"/></clipPath>
</defs>
<g clip-path="url(#gclip)">
<polygon points="389,449 1474,466 1474,475 389,458" fill="#8a9ac8"/>
<polygon points="509.3,544.0 540.0,550.4 580.0,556.5 613.0,561.7 640.0,563.0 700.0,562.0 760.0,560.8 820.0,557.0 840.0,555.6 900.0,551.2 940.0,548.2 1000.0,544.7 1100.0,538.3 1160.0,534.5 1220.0,529.6 1280.0,520.6 1328.6,507.0 1345.0,531.5 1326.0,532.4 1280.0,536.7 1220.0,540.5 1160.0,546.0 1100.0,548.6 1000.0,554.6 940.0,558.5 900.0,561.4 840.0,565.9 820.0,567.8 760.0,571.0 700.0,574.0 640.0,575.0 590.0,572.0 549.0,570.0 517.0,576.5 509.6,550.4" fill="url(#btm1)"/>
<polygon points="510.0,546.5 540.0,558.9 580.0,564.3 600.0,567.4 640.0,570.2 700.0,569.2 760.0,566.9 820.0,563.5 900.0,557.3 1000.0,550.6 1100.0,545.4 1160.0,543.0 1220.0,538.3 1280.0,533.8 1326.0,528.0 1345.0,527.1 1345.0,531.5 1326.0,532.4 1280.0,536.7 1220.0,540.5 1160.0,546.0 1100.0,548.6 1000.0,554.6 940.0,558.5 900.0,561.4 840.0,565.9 820.0,567.8 760.0,571.0 700.0,574.0 640.0,575.0 590.0,572.0 549.0,570.0 517.0,576.5" fill="url(#btm2)"/>
<g clip-path="url(#side)">
<rect x="495" y="380" width="920" height="200" fill="#cc0000"/>
<polygon points="495.0,576.0 580.0,566.0 640.0,558.5 700.0,550.0 760.0,543.5 820.0,541.0 840.0,540.3 900.0,542.2 940.0,546.3 1000.0,552.0 1415.0,560.0 1415.0,380.0 495.0,380.0" fill="#cc8800"/>
<polygon points="495.0,556.0 580.0,551.0 640.0,544.4 700.0,534.6 760.0,528.0 820.0,523.0 840.0,522.3 900.0,524.2 940.0,529.0 1000.0,536.0 1100.0,545.0 1415.0,545.0 1415.0,380.0 495.0,380.0" fill="#cccc00"/>
<polygon points="495.0,549.0 540.0,544.0 580.0,538.5 640.0,531.0 700.0,519.7 760.0,510.0 820.0,506.3 840.0,503.7 900.0,505.6 940.0,514.2 1000.0,521.9 1100.0,530.0 1220.0,531.0 1415.0,532.0 1415.0,380.0 495.0,380.0" fill="#90cc00"/>
<polygon points="495.0,533.5 540.0,530.0 580.0,527.7 640.0,518.0 700.0,510.9 760.0,506.3 820.0,501.0 840.0,499.9 900.0,497.3 940.0,498.8 1000.0,509.7 1100.0,519.0 1220.0,518.7 1415.0,520.0 1415.0,380.0 495.0,380.0" fill="#00cc00"/>
<polygon points="495.0,524.0 580.0,517.4 640.0,511.3 700.0,506.8 760.0,503.0 820.0,499.0 840.0,497.3 900.0,493.5 940.0,492.4 1000.0,497.6 1100.0,508.0 1220.0,507.8 1415.0,509.0 1415.0,380.0 495.0,380.0" fill="#00cc88"/>
<polygon points="495.0,516.0 580.0,510.4 640.0,504.6 700.0,500.7 760.0,496.0 820.0,493.5 840.0,492.2 900.0,489.6 940.0,489.0 1000.0,491.0 1100.0,497.0 1220.0,496.9 1415.0,498.0 1415.0,380.0 495.0,380.0" fill="#00cccc"/>
<polygon points="495.0,508.0 580.0,501.4 640.0,496.9 700.0,491.9 760.0,487.5 840.0,483.8 900.0,482.6 940.0,482.8 1000.0,482.0 1100.0,486.0 1220.0,486.7 1415.0,487.0 1415.0,380.0 495.0,380.0" fill="#0088cc"/>
<polygon points="495.0,440.0 900.0,466.0 940.0,470.0 1000.0,472.6 1100.0,478.0 1220.0,475.0 1340.0,476.0 1415.0,476.0 1415.0,380.0 495.0,380.0" fill="#0000cc"/>
<polygon points="999.0,463.7 1030.0,455.0 1054.0,446.5 1084.0,436.0 1117.0,422.6 1172.5,417.4 1172.5,417.4 1145.0,430.0 1114.0,439.8 1069.0,451.0 1040.0,458.0 999.0,465.0" fill="#000080"/>
<polygon points="1230,470.5 1339,464 1339.6,441 1402.4,438.2 1343,493.4 1330,510 1230,540" fill="url(#stemshade)"/>
<polygon points="1339.6,440.8 1402.4,438.2 1366,472 1338,475" fill="#000090" opacity="0.85"/>
</g>
<polygon points="509.6,550.4 482.7,570.8 517,576.5 530,566 540,552" fill="#4a4400"/>
<polygon points="482.7,570.8 517,576.5 517,572 500,566" fill="#4a3400"/>
<polygon points="517,577 549,580 549,585.5 517,587.6" fill="#b88000"/>
<polygon points="517,584.5 530,583 549,584 549,585.5 517,587.6" fill="#b00000"/>
<polygon points="549,569.7 590,571.5 676,574.6 590,583.8 549,585.5" fill="#c08400"/>
<polygon points="549,578 590,576 676,574.6 590,583.8 549,585.5" fill="#b00000"/>
<polygon points="509.6,550.4 482.7,570.8 517,576.5 549,579 549,569.7 590,571.5 610,569 580,563 540,557 515,551" fill="#4a4400"/>
<clipPath id="trc"><polygon points="446.7,504 506.5,497.9 509.6,550.4 482.1,571.2 451.6,557.8"/></clipPath>
<g clip-path="url(#trc)">
<rect x="440" y="495" width="75" height="80" fill="#402a00"/>
<polygon points="446,547 470.5,556 490,550 510,542.5 510,490 446,490" fill="#3c3c00"/>
<polygon points="446,541 467,546 490,540 510,533 510,490 446,490" fill="#263800"/>
<polygon points="446,531.5 464,536.4 490,530 510,524 510,490 446,490" fill="#003c00"/>
<polygon points="446,523 464,526.6 490,520 510,514.4 510,490 446,490" fill="#003a3a"/>
<polygon points="446,513 464,519 489,511 510,503 510,490 446,490" fill="#002a42"/>
<polygon points="446,507 456,512 464,519 489,511 510,503 510,490 446,490" fill="#000048"/>
</g>
<path d="M1325.3,532.5 L1328.7,507 Q1333,495 1341,493 Q1357.6,494 1357.6,512 Q1357.6,530.5 1341,531.4Z" fill="url(#bulb)"/>
<path d="M1325.3,532.5 L1328.7,507 Q1333,495 1341,493 Q1357.6,494 1357.6,512 Q1357.6,530.5 1341,531.4Z" fill="url(#bulbhl)"/>
<path d="M1325.3,532.5 L1328.7,507 Q1333,495 1341,493 Q1357.6,494 1357.6,512 Q1357.6,530.5 1341,531.4Z" fill="url(#bulbsh)"/>
<polyline points="506.5,519.4 580.0,514.2 640.0,510.8 700.0,506.5 760.0,502.4 820.0,498.6 840.0,497.3 900.0,492.8 940.0,490.5 1000.0,486.7 1130.0,477.0 1170.0,474.7 1340.0,464.0 1375.0,462.0" stroke="#f0f0f0" stroke-width="1" fill="none"/>
<polyline points="506.5,497.9 580.0,492.4 640.0,488.6 700.0,484.4 840.0,474.2 900.0,470.4 940.0,468.0 999.0,463.7 1030.0,455.0 1054.0,446.5 1084.0,436.0 1117.0,422.6 1172.5,417.4 1400.7,402.6" stroke="#d8dcec" stroke-width="1" fill="none"/>
<polyline points="446.7,525.5 506.5,519.4" stroke="#f0f0f0" stroke-width="1" fill="none"/>
<polyline points="509.3,544.0 540.0,550.4 580.0,556.5 613.0,561.7 640.0,563.0 700.0,562.0 760.0,560.8 820.0,557.0 840.0,555.6 900.0,551.2 940.0,548.2 1000.0,544.7 1100.0,538.3 1160.0,534.5 1220.0,529.6 1280.0,520.6 1328.6,507.0" stroke="#f0f0f0" stroke-width="1" fill="none"/>
<polyline points="999.0,465.0 1040.0,458.0 1069.0,451.0 1114.0,439.8 1145.0,430.0 1172.5,417.4" stroke="#f0f0f0" stroke-width="1" fill="none"/>
<polyline points="506.5,497.9 509.6,550.4 482.7,570.8" stroke="#f0f0f0" stroke-width="1" fill="none"/>
<polyline points="1176,417 1181,480 1183.6,541" stroke="#f0f0f0" stroke-width="1" fill="none"/>
<path d="M1338,406 L1339.6,441 Q1339,480 1328.7,507" stroke="#f0f0f0" stroke-width="1" fill="none"/>
<polyline points="1339.6,440.8 1402.4,438.2" stroke="#f0f0f0" stroke-width="1" fill="none"/>
<polyline points="1398,403 1401,438" stroke="#f0f0f0" stroke-width="1" fill="none"/>
<polyline points="1402.4,438.2 1341,493" stroke="#f0f0f0" stroke-width="1" fill="none"/>
<polyline points="590.0,572.0 640.0,575.0 700.0,574.0 760.0,571.0 820.0,567.8 840.0,565.9 900.0,561.4 940.0,558.5 1000.0,554.6 1100.0,548.6 1160.0,546.0 1220.0,540.5 1280.0,536.7 1326.0,532.4 1345.0,531.5" stroke="#e8e8e0" stroke-width="1" fill="none"/>
<polyline points="482.7,570.8 517,576.5 549,579" stroke="#e8e8e0" stroke-width="1" fill="none"/>
<polyline points="517,587.6 549,585.5 590,583.8 676,575 700,574" stroke="#e0e0d8" stroke-width="1" fill="none"/>
<polyline points="517,577 517,587.6" stroke="#f0f0f0" stroke-width="1" fill="none"/>
<polyline points="549,569.7 549,585.5" stroke="#f0f0f0" stroke-width="1" fill="none"/>
<polyline points="549,569.7 590,571.5" stroke="#f0f0f0" stroke-width="1" fill="none"/>
<polyline points="590,572 590,583" stroke="#f0f0f0" stroke-width="1" fill="none"/>
<polyline points="805.5,557 805.5,568" stroke="#f0f0f0" stroke-width="1" fill="none"/>
<path d="M1328.7,507 Q1327.5,520 1325.8,532" stroke="#f0f0f0" stroke-width="1" fill="none"/>
<path d="M1341,493.5 Q1346.5,512 1343.5,531" stroke="#f0f0f0" stroke-width="1" fill="none"/>
</g>
<polygon points="698.5,467.5 831,467.5 838,476.5 831,485.5 698.5,485.5" fill="#0ed2ec" stroke="#000" stroke-width="1"/>
<polygon points="1130.5,467.5 1162,467.5 1169,476.5 1162,485.5 1130.5,485.5" fill="#0a0aff" stroke="#000" stroke-width="1"/>
<polygon points="695.5,559.5 728,559.5 735,568 728,576.5 695.5,576.5" fill="#ff0000" stroke="#000" stroke-width="1"/>
<polygon points="731,573 737,567 737,573" fill="#fff"/>
<rect x="404" y="173" width="16" height="153" fill="#000"/>
<rect x="405" y="176.5" width="14" height="15.6" fill="#ff0000"/>
<rect x="405" y="193.1" width="14" height="15.6" fill="#ffaa00"/>
<rect x="405" y="209.7" width="14" height="15.6" fill="#ffff00"/>
<rect x="405" y="226.3" width="14" height="15.6" fill="#aaff00"/>
<rect x="405" y="242.9" width="14" height="15.6" fill="#00ff00"/>
<rect x="405" y="259.5" width="14" height="15.6" fill="#00ffaa"/>
<rect x="405" y="276.1" width="14" height="15.6" fill="#00ffff"/>
<rect x="405" y="292.7" width="14" height="15.6" fill="#00aaff"/>
<rect x="405" y="309.3" width="14" height="15.6" fill="#0000ff"/>
<polygon points="1377,909 1381,909 1377,857 1373.5,857" fill="#0000c0"/>
<polygon points="1374.3,840 1382,857 1368,857" fill="#0000d0"/>
<polygon points="1380,907 1429,902.5 1429,907 1380,911" fill="#c00000"/>
<polygon points="1445.8,905.2 1428,899.8 1428,913.4" fill="#d00000"/>
<polygon points="1428,899.8 1430,900.5 1430,912.8 1428,913.4" fill="#600000"/>
<ellipse cx="1361" cy="911.5" rx="6.8" ry="7" fill="#108a10"/>
<polygon points="1360,910 1378,908.5 1378,911 1360,913" fill="#003000"/>
<defs><radialGradient id="cyb" cx="0.6" cy="0.35" r="0.7"><stop offset="0" stop-color="#30f0f8"/><stop offset="1" stop-color="#108890"/></radialGradient></defs>
<circle cx="1396.5" cy="876.2" r="7" fill="url(#cyb)"/>
<path d="M1351,904 L1353.5,909" stroke="#20c020" stroke-width="0.8"/>
<rect x="782.5" y="932.5" width="297" height="17" fill="#fff" stroke="#000" stroke-width="1"/>
<rect x="783" y="933" width="74" height="16" fill="#000"/>
<rect x="930" y="933" width="76" height="16" fill="#000"/>
</svg>
<div class="a" style="left:404px;top:94.18px;font-size:11.6px;line-height:11.6px;font-weight:bold;color:#000">D: Static Structural</div>
<div class="a" style="left:404px;top:109.18px;font-size:11.6px;line-height:11.6px;color:#000">Hydrodynamic Pressure</div>
<div class="a" style="left:404px;top:124.18px;font-size:11.6px;line-height:11.6px;color:#000">Time: 1. s</div>
<div class="a" style="left:404px;top:139.18px;font-size:11.6px;line-height:11.6px;color:#000">10/04/2020 13:57</div>
<div class="a" style="left:428px;top:168.18px;font-size:11.6px;line-height:11.6px;font-weight:bold;color:#000">133674 Max</div>
<div class="a" style="left:428px;top:184.48px;font-size:11.6px;line-height:11.6px;color:#000">118821</div>
<div class="a" style="left:428px;top:201.08px;font-size:11.6px;line-height:11.6px;color:#000">103968</div>
<div class="a" style="left:428px;top:217.68px;font-size:11.6px;line-height:11.6px;color:#000">89115.8</div>
<div class="a" style="left:428px;top:234.28px;font-size:11.6px;line-height:11.6px;color:#000">74263.2</div>
<div class="a" style="left:428px;top:250.88px;font-size:11.6px;line-height:11.6px;color:#000">59410.6</div>
<div class="a" style="left:428px;top:267.48px;font-size:11.6px;line-height:11.6px;color:#000">44557.9</div>
<div class="a" style="left:428px;top:284.08px;font-size:11.6px;line-height:11.6px;color:#000">29705.3</div>
<div class="a" style="left:428px;top:300.68px;font-size:11.6px;line-height:11.6px;color:#000">14852.6</div>
<div class="a" style="left:428px;top:317.68px;font-size:11.6px;line-height:11.6px;font-weight:bold;color:#000">-0.0108007 Min</div>
<div class="a" style="left:702px;top:471.18px;font-size:11.6px;line-height:11.6px;color:#000">Hydrodynamic Pressure</div>
<div class="a" style="left:1134px;top:471.18px;font-size:11.6px;line-height:11.6px;color:#fff">Min</div>
<div class="a" style="left:698px;top:562.68px;font-size:11.6px;line-height:11.6px;color:#fff">Max</div>
<div class="a" style="left:772px;top:919.19px;font-size:11px;line-height:11px;color:#000">0.00</div>
<div class="a" style="left:916.5px;top:919.19px;font-size:11px;line-height:11px;color:#000">20.00</div>
<div class="a" style="left:1066px;top:919.19px;font-size:11px;line-height:11px;color:#000">40.00 (m)</div>
<div class="a" style="left:842.5px;top:961.99px;font-size:11px;line-height:11px;color:#000">10.00</div>
<div class="a" style="left:992.5px;top:961.99px;font-size:11px;line-height:11px;color:#000">30.00</div>
<div class="a" style="left:1372.5px;top:819.57px;font-size:11.5px;line-height:11.5px;color:#1010ff">Z</div>
<div class="a" style="left:1454.5px;top:895.99px;font-size:11px;line-height:11px;color:#ff2020">X</div>
<div class="a" style="left:0px;top:994px;width:1474px;height:21px;background:#007acc;"></div>
<div class="a" style="left:8px;top:999.01px;font-size:11.8px;line-height:11.8px;color:#fff">Ready</div>
<div class="a" style="left:990px;top:999.01px;font-size:11.8px;line-height:11.8px;color:#fff">11 Messages</div>
<div class="a" style="left:1073.5px;top:999.01px;font-size:11.8px;line-height:11.8px;color:#fff">No Selection</div>
<div class="a" style="left:1176px;top:999.01px;font-size:11.8px;line-height:11.8px;color:#fff">Metric (m, kg, N, s, V, A)</div>
<div class="a" style="left:1316px;top:999.01px;font-size:11.8px;line-height:11.8px;color:#fff">Degrees</div>
<div class="a" style="left:1370.5px;top:999.01px;font-size:11.8px;line-height:11.8px;color:#fff">rad/s</div>
<div class="a" style="left:1409px;top:999.01px;font-size:11.8px;line-height:11.8px;color:#fff">Celsius</div>
<svg class="a" style="left:970px;top:996px" width="18" height="18" viewBox="0 0 18 18"><path d="M1.5,6 H16.5 V14 H7 L4,17.5 V14 H1.5Z" fill="#f2d27a" stroke="#b89030" stroke-width="0.8"/><circle cx="10" cy="6" r="5" fill="#1a2fc0" stroke="#fff" stroke-width="0.8"/><rect x="9.2" y="5" width="1.8" height="4" fill="#fff"/><rect x="9.2" y="2.6" width="1.8" height="1.6" fill="#fff"/></svg>
<svg class="a" style="left:1162px;top:1001px" width="9" height="6"><polygon points="0,5.5 8,5.5 4,1" fill="#fff"/></svg>
<div class="a" style="left:1455px;top:1002px;width:14px;height:11px;background-image:radial-gradient(circle,#9cc4ea 0.7px,transparent 1px);background-size:3px 3px"></div>
</body></html>
